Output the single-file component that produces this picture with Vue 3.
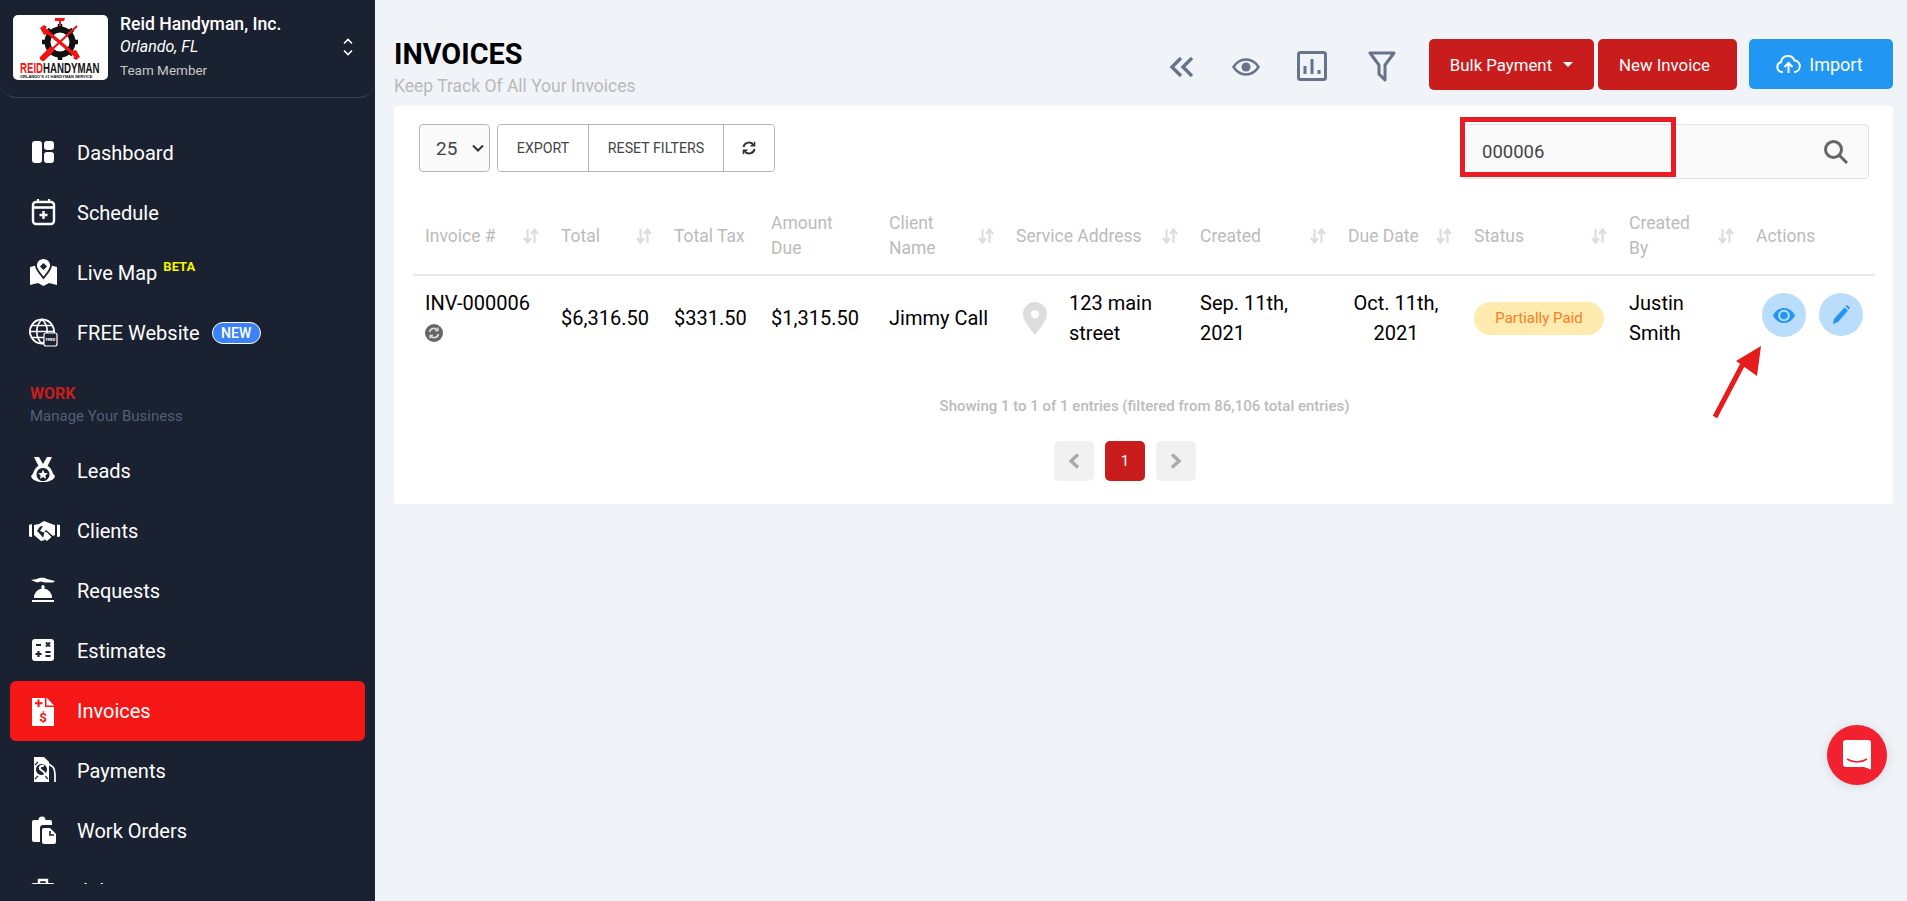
<script setup>
const DARK = '#1a2130'
const RED = '#f51616'
const rr = (x, y, w, h, r) =>
  `M${x + r} ${y}H${x + w - r}a${r} ${r} 0 0 1 ${r} ${r}V${y + h - r}a${r} ${r} 0 0 1 -${r} ${r}H${x + r}a${r} ${r} 0 0 1 -${r} -${r}V${y + r}a${r} ${r} 0 0 1 ${r} -${r}Z`

const icons = {
  dashboard: [{ d: rr(3, 3, 10, 22, 3) }, { d: rr(15, 3, 10, 9, 3) }, { d: rr(15, 14, 10, 11, 3) }],
  schedule: [
    { d: rr(4, 4, 21, 22, 3), f: 'none', s: '#fff', w: 2.4 },
    { d: 'M4 9.5H25', f: 'none', s: '#fff', w: 2.6 },
    { d: 'M9 1V5M20 1V5', f: 'none', s: '#fff', w: 2.2 },
    { d: 'M14.5 13V21M10.5 17H18.5', f: 'none', s: '#fff', w: 2.4 }
  ],
  map: [
    { d: 'M1 9L9 7L14.5 10L20 7L28 9V27L20 25L14.5 28L9 25L1 27Z' },
    { d: 'M14.5 0a7.5 7.5 0 0 1 7.5 7.5c0 4-4 8-7.5 12.500c-3.500-4.500-7.500-8.500-7.500-12.500a7.500 7.500 0 0 1 7.500-7.500Z', s: DARK, w: 1.8 },
    { d: 'M14.500 5L18 8.500L14.500 12L11 8.500Z', f: DARK },
    { d: 'M14.500 20.500L10 15L14.500 19L19 15Z', f: DARK }
  ],
  globe: [
    { d: 'M13 1.500a12 12 0 1 0 .01 0Z', f: 'none', s: '#fff', w: 1.8 },
    { d: 'M13 1.500c-7 6-7 18 0 24c7-6 7-18 0-24ZM1.500 13.500H25M3 7.500H23M3 19.500H23', f: 'none', s: '#fff', w: 1.6 },
    { d: rr(15, 15, 13, 13, 2), f: DARK, s: '#fff', w: 1.2 },
    { t: 'FREE', x: 21.5, y: 23.2, size: 4.2 }
  ],
  leads: [
    { d: 'M5 1H10L14 8L18 1H23L18.500 10H9.500Z' },
    { d: 'M14 9a9.500 9.500 0 0 1 9 6c1 3 2 4 3 5c-1 4-6 6-12 6s-11-2-12-6c1-1 2-2 3-5a9.500 9.500 0 0 1 9-6Z' },
    { d: 'M14 12a6.500 6.500 0 1 0 .01 0Z', f: DARK },
    { d: 'M14 13.700l1.500 3.200 3.400.3-2.600 2.200.8 3.300-3.100-1.800-3.100 1.800.8-3.300-2.600-2.200 3.400-.3Z' }
  ],
  clients: [
    { d: 'M0 9L3 8V21L0 20.500ZM28 8.500L31 9V20.500L28 21Z' },
    { d: 'M5 9L10 8L15 5L24 8.500L26 9V19L24 20L17 14L15 16.500L11 15L14 10L11 10.500L8 15L11 18L16 24L12 25L5 19Z' },
    { d: 'M15.500 16L17.500 16L22.500 21L18 25L14 22Z' }
  ],
  requests: [
    { d: 'M2 4L8 3C12 1 16 2 18 3L26 5L24 6.500H16L12 5.500L8 6.500Z' },
    { d: 'M14 9a2 2 0 0 1 1 3.500a9 9 0 0 1 8 9.500H5a9 9 0 0 1 8-9.500a2 2 0 0 1 1-3.500Z' },
    { d: 'M3 24H25V26H3Z' }
  ],
  estimates: [
    { d: rr(3, 3, 22, 22, 3) },
    { d: 'M7 9H12M17 6.500L21 10.500M21 6.500L17 10.500M9.500 15V21M6.500 18H12.500M16.500 16H21.500M16.500 20H21.500', f: 'none', s: DARK, w: 2.1 }
  ],
  invoices: [
    { d: 'M3 2H16V11H25V29a1 1 0 0 1 -1 1H4a1 1 0 0 1 -1-1Z' },
    { d: 'M17.500 1.500L25 9.500H17.500Z' },
    { d: 'M9.500 3.500V11M6 7.200H13.500', f: 'none', s: RED, w: 2 },
    { t: '$', x: 14.2, y: 25.5, size: 13.5, f: RED, weight: 700 }
  ],
  payments: [
    { d: 'M5 1H15L20 6V26H5Z' },
    { d: 'M6 9L9 6M6 23L9 20M19 23L16 20', f: 'none', s: DARK, w: 1.2 },
    { d: 'M12.500 8a5.500 5.500 0 1 0 .01 0Z', f: DARK },
    { d: 'M15 10c-3-1-5 1-4 3s5 2 5 5s-3 4-6 2', f: 'none', s: '#fff', w: 2 },
    { d: 'M17 6L24 11C25.500 13 26 16 26 20V26', f: 'none', s: '#fff', w: 1.7 }
  ],
  orders: [
    { d: 'M3 6a2 2 0 0 1 2-2H9.500a3.500 3.500 0 0 1 7 0H21a2 2 0 0 1 2 2V9H14a3 3 0 0 0 -3 3V26H5a2 2 0 0 1 -2-2Z' },
    { d: 'M15 12H21L27 18V26a2 2 0 0 1 -2 2H15a2 2 0 0 1 -2-2V14a2 2 0 0 1 2-2Z' },
    { d: 'M21 15V19H25', f: 'none', s: DARK, w: 1.6 }
  ],
  jobs: [
    { d: 'M10 8V4H18V8', f: 'none', s: '#fff', w: 2.4 },
    { d: rr(2, 7, 24, 19, 3) }
  ]
}

const navTop = [
  { label: 'Dashboard', icon: 'dashboard' },
  { label: 'Schedule', icon: 'schedule' },
  { label: 'Live Map', icon: 'map', sup: 'BETA' },
  { label: 'FREE Website', icon: 'globe', pill: 'NEW' }
]
const navWork = [
  { label: 'Leads', icon: 'leads' },
  { label: 'Clients', icon: 'clients' },
  { label: 'Requests', icon: 'requests' },
  { label: 'Estimates', icon: 'estimates' },
  { label: 'Invoices', icon: 'invoices', active: true },
  { label: 'Payments', icon: 'payments' },
  { label: 'Work Orders', icon: 'orders' },
  { label: 'Jobs', icon: 'jobs' }
]
const groups = [navTop, null, navWork]

const columns = [
  { label: 'Invoice #', width: 136, sort: true },
  { label: 'Total', width: 113, sort: true },
  { label: 'Total Tax', width: 97 },
  { label: 'Amount Due', width: 118, narrow: true },
  { label: 'Client Name', width: 127, sort: true, narrow: true },
  { label: 'Service Address', width: 184, sort: true },
  { label: 'Created', width: 148, sort: true },
  { label: 'Due Date', width: 126, sort: true },
  { label: 'Status', width: 155, sort: true },
  { label: 'Created By', width: 127, sort: true, narrow: true },
  { label: 'Actions', width: 131 }
]
</script>

<template>
  <div class="app">
    <aside class="sidebar">
      <header class="account">
        <div class="logo">
          <svg width="95" height="65" viewBox="0 0 95 65">
            <circle cx="47" cy="27" r="12.500" fill="none" stroke="#111" stroke-width="6" />
            <g stroke="#111" stroke-width="4.500">
              <path d="M47 9V13M47 41V45M29 27H33M61 27H65M34.300 14.300L37 17M59.700 14.300L57 17M34.300 39.700L37 37M59.700 39.700L57 37" />
            </g>
            <path d="M31 14L63 41" stroke="#f01414" stroke-width="3.500" />
            <path d="M27 13l4-3 3 2-2 2 1 2 3-1-1 4-4 1zM67 42l-4 3-3-2 2-2-1-2-3 1 1-4 4-1z" fill="#f01414" />
            <path d="M64 11L34 39" stroke="#f01414" stroke-width="2.200" />
            <path d="M38 35L32 41L30 43" stroke="#f01414" stroke-width="6" stroke-linecap="round" />
            <path d="M42 3H52L51 6H48V11H46V6L42 6Z" fill="#f01414" />
            <text transform="translate(7 58) scale(.645 1)" font-size="15" font-weight="700" font-family="'Liberation Sans', sans-serif" fill="#111"><tspan fill="#f01414">REID</tspan>HANDYMAN</text>
            <rect x="7" y="59" width="80" height="5" fill="#fff" />
            <text x="7" y="63" font-size="4" font-weight="700" font-family="'Liberation Sans', sans-serif" fill="#111">ORLANDO'S #1 HANDYMAN SERVICE</text>
          </svg>
        </div>
        <div class="account-text">
          <div class="account-name">Reid Handyman, Inc.</div>
          <div class="account-city">Orlando, FL</div>
          <div class="account-role">Team Member</div>
        </div>
        <svg class="updown" width="12" height="20" viewBox="0 0 12 20" fill="none" stroke="#fff" stroke-width="1.600">
          <path d="M2 6.500L6 2.500L10 6.500M2 13.500L6 17.500L10 13.500" />
        </svg>
      </header>

      <nav class="nav">
        <template v-for="(group, gi) in groups" :key="gi">
          <div v-if="!group" class="section">
            <div class="section-title">WORK</div>
            <div class="section-sub">Manage Your Business</div>
          </div>
          <template v-else>
            <a v-for="item in group" :key="item.label" class="nav-item" :class="{ active: item.active }">
              <svg class="nav-icon" width="31" height="31" viewBox="0 0 31 31" fill="#fff">
                <template v-for="(p, i) in icons[item.icon]" :key="i">
                  <text v-if="p.t" :x="p.x" :y="p.y" :font-size="p.size" :fill="p.f || '#fff'" font-weight="700" text-anchor="middle" font-family="Roboto, sans-serif">{{ p.t }}</text>
                  <path v-else :d="p.d" :fill="p.f || '#fff'" :stroke="p.s || 'none'" :stroke-width="p.w || 0" />
                </template>
              </svg>
              <span>{{ item.label }}</span>
              <sup v-if="item.sup" class="beta">{{ item.sup }}</sup>
              <span v-if="item.pill" class="new-pill">{{ item.pill }}</span>
            </a>
          </template>
        </template>
      </nav>
    </aside>

    <main class="main">
      <div class="page-head">
        <div class="page-title">
          <h1>INVOICES</h1>
          <p>Keep Track Of All Your Invoices</p>
        </div>
        <div class="page-actions">
          <svg class="tool chev" width="28" height="24" viewBox="0 0 28 24" fill="none" stroke="#667389" stroke-width="3.400">
            <path d="M13 3L4 12L13 21M24 3L15 12L24 21" />
          </svg>
          <svg class="tool eye" width="28" height="18" viewBox="0 0 28 18">
            <path d="M1.500 9C5 3.500 9 1.500 14 1.500S23 3.500 26.500 9C23 14.500 19 16.500 14 16.500S5 14.500 1.500 9Z" fill="none" stroke="#667389" stroke-width="2.400" />
            <circle cx="14" cy="9" r="4.500" fill="#667389" />
          </svg>
          <svg class="tool chart" width="30" height="30" viewBox="0 0 30 30" fill="none" stroke="#667389">
            <rect x="1.500" y="1.500" width="27" height="27" rx="2" stroke-width="3" />
            <path d="M8 23V15M15 23V8M22 23V19" stroke-width="3" />
          </svg>
          <svg class="tool filter" width="28" height="31" viewBox="0 0 28 31" fill="none" stroke="#667389" stroke-width="3" stroke-linejoin="round">
            <path d="M2 2H26L17 14V29L11 23V14Z" />
          </svg>
          <button class="btn red bulk">Bulk Payment <i class="caret"></i></button>
          <button class="btn red new-inv">New Invoice</button>
          <button class="btn blue import">
            <svg width="25" height="20" viewBox="0 0 25 20" fill="none" stroke="#fff" stroke-width="2">
              <path d="M7 18H6a5 5 0 0 1 -1-9.800A7 7 0 0 1 18.500 6.500a5.800 5.800 0 0 1 .5 11.500H18" />
              <path d="M12.500 19V10M8.500 13L12.500 9L16.500 13" />
            </svg>
            Import
          </button>
        </div>
      </div>

      <section class="card">
        <div class="toolbar">
          <div class="select-wrap">
            <select class="page-size">
              <option>25</option>
            </select>
            <svg class="select-arrow" width="12" height="8" viewBox="0 0 12 8" fill="none" stroke="#333" stroke-width="2">
              <path d="M1 1.500L6 6.500L11 1.500" />
            </svg>
          </div>
          <div class="btn-group">
            <button class="tb-btn export">EXPORT</button>
            <button class="tb-btn reset">RESET FILTERS</button>
            <button class="tb-btn refresh" aria-label="Refresh">
              <svg width="14" height="14" viewBox="0 0 14 14" fill="none" stroke="#333" stroke-width="2">
                <path d="M1.500 6a5.500 5.500 0 0 1 10-2M12.500 8a5.500 5.500 0 0 1 -10 2" />
                <path d="M12.500 .8V4.800H8.500M1.500 13.200V9.200H5.500" stroke-width="1.600" />
              </svg>
            </button>
          </div>
          <div class="search">
            <span class="search-value">000006</span>
            <svg width="26" height="24" viewBox="0 0 26 24" fill="none" stroke="#666" stroke-width="3">
              <circle cx="10.500" cy="9.500" r="8" />
              <path d="M16.500 15.500L24 23" />
            </svg>
          </div>
        </div>

        <table class="table">
          <colgroup>
            <col v-for="c in columns" :key="c.label" :style="{ width: c.width + 'px' }" />
          </colgroup>
          <thead>
            <tr>
              <th v-for="c in columns" :key="c.label">
                <div class="th-inner">
                  <span :class="{ narrow: c.narrow }">{{ c.label }}</span>
                  <svg v-if="c.sort" class="sort" width="16" height="16" viewBox="0 0 16 16" fill="none" stroke="#ddd" stroke-width="2.200">
                    <path d="M4.500 1V14M1 10L4.500 14.500L8 10" />
                    <path d="M11.500 15V2M8 6L11.500 1.500L15 6" />
                  </svg>
                </div>
              </th>
            </tr>
          </thead>
          <tbody>
            <tr>
              <td class="top">
                <div>INV-000006</div>
                <svg class="sync" width="18" height="18" viewBox="0 0 18 18">
                  <circle cx="9" cy="9" r="9" fill="#666" />
                  <g fill="none" stroke="#ddd" stroke-width="1.700">
                    <path d="M4.500 8a4.600 4.600 0 0 1 8-2M13.500 10a4.600 4.600 0 0 1 -8 2" />
                    <path d="M13 3.500V6.500H10M5 14.500V11.500H8" stroke-width="1.300" />
                  </g>
                </svg>
              </td>
              <td>$6,316.50</td>
              <td>$331.50</td>
              <td>$1,315.50</td>
              <td>Jimmy Call</td>
              <td>
                <div class="address">
                  <svg width="24" height="33" viewBox="0 0 24 33">
                    <path fill-rule="evenodd" fill="#ddd" d="M12 0a12 12 0 0 1 12 12c0 7-7 14-12 21C7 26 0 19 0 12A12 12 0 0 1 12 0Zm0 8a4.200 4.200 0 1 0 .01 0Z" />
                  </svg>
                  <span>123 main street</span>
                </div>
              </td>
              <td><div class="created">Sep. 11th, 2021</div></td>
              <td class="center"><div class="due">Oct. 11th, 2021</div></td>
              <td><span class="status">Partially Paid</span></td>
              <td><div class="creator">Justin Smith</div></td>
              <td>
                <div class="row-actions">
                  <button class="round view" aria-label="View">
                    <svg width="22" height="15" viewBox="0 0 22 15">
                      <path fill-rule="evenodd" fill="#2196f3" d="M11 0c4.800 0 8.800 3 11 7.500C19.800 12 15.800 15 11 15S2.200 12 0 7.500C2.200 3 6.200 0 11 0Zm0 1.700a5.800 5.800 0 1 0 .01 0Z" />
                      <circle cx="11" cy="7.500" r="3.800" fill="#2196f3" />
                    </svg>
                  </button>
                  <button class="round edit" aria-label="Edit">
                    <svg width="18" height="20" viewBox="0 0 18 20" fill="#2196f3">
                      <path d="M12.500 2.500L16 5.500L6 17L1 19L2 14Z" />
                      <path d="M13.500 1L15 0L18 2.800L16.800 4.500Z" />
                    </svg>
                  </button>
                </div>
              </td>
            </tr>
          </tbody>
        </table>

        <div class="info">Showing 1 to 1 of 1 entries (filtered from 86,106 total entries)</div>
        <div class="pager">
          <span class="page ghost">
            <svg width="12" height="16" viewBox="0 0 12 16" fill="none" stroke="#aaa" stroke-width="3.400"><path d="M10 1.500L3 8L10 14.500" /></svg>
          </span>
          <span class="page current">1</span>
          <span class="page ghost">
            <svg width="12" height="16" viewBox="0 0 12 16" fill="none" stroke="#aaa" stroke-width="3.400"><path d="M2 1.500L9 8L2 14.500" /></svg>
          </span>
        </div>
      </section>
    </main>

    <div class="highlight"></div>
    <svg class="arrow" width="60" height="84" viewBox="0 0 60 84">
      <path d="M5 78L35 21" stroke="#e61c1c" stroke-width="5" />
      <path d="M51 7L26 22L47 37Z" fill="#e61c1c" />
    </svg>
    <button class="chat" aria-label="Chat">
      <svg width="28" height="30" viewBox="0 0 28 30">
        <path d="M3 0H25a3 3 0 0 1 3 3V29.500L21 27H3a3 3 0 0 1 -3-3V3a3 3 0 0 1 3-3Z" fill="#fff" />
        <path d="M4 19C10 23 18 23 24 19" fill="none" stroke="#f2212f" stroke-width="1.600" />
      </svg>
    </button>
  </div>
</template>

<style>
html, body { margin: 0; overflow: hidden; }
</style>

<style scoped>
.app {
  position: relative;
  display: flex;
  height: 901px;
  font-family: Roboto, sans-serif;
  background: #f0f4f9;
  overflow: hidden;
}
.sidebar {
  width: 375px;
  flex: none;
  display: flex;
  flex-direction: column;
  background: #1a2130;
  color: #fff;
}
.account {
  height: 97px;
  box-sizing: content-box;
  display: flex;
  align-items: flex-start;
  border-bottom: 1px solid #3a404d;
  border-radius: 0 0 16px 16px;
  position: relative;
}
.logo {
  margin: 15px 0 0 13px;
  width: 95px;
  height: 65px;
  background: #fff;
  border-radius: 5px;
  overflow: hidden;
  flex: none;
}
.logo svg { display: block; }
.account-text { margin: 13px 0 0 12px; flex: 1; }
.account-name { font-size: 17.600px; font-weight: 500; line-height: 22px; }
.account-city { font-size: 16px; font-style: italic; line-height: 24px; }
.account-role { font-size: 13.500px; line-height: 23px; color: #c8c8c8; }
.updown { margin: 37px 21px 0 0; }
.nav {
  flex: 1;
  min-height: 0;
  margin-bottom: 17px;
  padding-top: 25px;
  overflow: hidden;
}
.nav-item {
  display: flex;
  align-items: center;
  height: 60px;
  margin: 0 10px;
  padding-left: 19px;
  border-radius: 6px;
  font-size: 20px;
  color: #fff;
}
.nav-item.active { background: #f51616; }
.nav-icon { flex: none; margin-right: 17px; }
.beta {
  font-size: 13px;
  font-weight: 700;
  color: #f5f500;
  margin: -14px 0 0 6px;
  line-height: 1;
}
.new-pill {
  margin-left: 12px;
  width: 49px;
  height: 22px;
  box-sizing: border-box;
  border: 1px solid #fff;
  border-radius: 11px;
  background: #3b82f6;
  font-size: 14px;
  font-weight: 500;
  line-height: 20px;
  text-align: center;
}
.section { height: 78px; box-sizing: border-box; padding: 21px 0 0 30px; }
.section-title { font-size: 16px; font-weight: 700; line-height: 20px; color: #c81e1e; }
.section-sub { font-size: 15px; line-height: 24px; color: #535f7a; }

.main { flex: 1; min-width: 0; }
.page-head {
  height: 106px;
  box-sizing: border-box;
  display: flex;
  justify-content: space-between;
  padding: 0 14px 0 19px;
}
.page-title { padding-top: 37px; }
.page-title h1 { margin: 0; font-size: 28.800px; font-weight: 700; line-height: 34px; color: #000; }
.page-title p { margin: 5px 0 0; font-size: 17.500px; line-height: 20px; color: #b9b9b9; }
.page-actions { display: flex; align-items: flex-start; padding-top: 39px; }
.tool { flex: none; }
.chev { margin: 16px 0 0 0; }
.eye { margin: 19px 0 0 36px; }
.chart { margin: 12px 0 0 37px; }
.filter { margin: 12px 0 0 41px; }
.btn {
  display: flex;
  align-items: center;
  justify-content: center;
  border: 0;
  border-radius: 5px;
  color: #fff;
  font-family: Roboto, sans-serif;
  font-size: 16.800px;
  height: 51px;
  padding: 0;
}
.red { background: #c91d1d; }
.blue { background: #2196f3; }
.bulk { width: 165px; margin-left: 33px; }
.new-inv { width: 139px; margin-left: 4px; padding-right: 6px; }
.import { width: 144px; margin-left: 12px; height: 50px; font-size: 18px; gap: 8px; padding-right: 3px; }
.caret {
  display: inline-block;
  margin-left: 11px;
  border-left: 5px solid transparent;
  border-right: 5px solid transparent;
  border-top: 5px solid #fff;
}

.card {
  margin: 0 14px 0 19px;
  box-sizing: border-box;
  height: 398px;
  padding: 18px 17px 0 19px;
  background: #fff;
  border-radius: 4px;
}
.toolbar { display: flex; align-items: flex-start; padding: 0 7px 0 6px; }
.select-wrap { position: relative; width: 71px; height: 48px; }
.page-size {
  width: 71px;
  height: 48px;
  box-sizing: border-box;
  border: 1px solid #b5b5b5;
  border-radius: 4px;
  background: #fafafa;
  color: #444;
  font-family: Roboto, sans-serif;
  font-size: 19px;
  padding-left: 16px;
  appearance: none;
}
.select-arrow { position: absolute; right: 6px; top: 20px; pointer-events: none; }
.btn-group {
  display: flex;
  height: 48px;
  box-sizing: border-box;
  margin-left: 7px;
  border: 1px solid #b5b5b5;
  border-radius: 4px;
}
.tb-btn {
  border: 0;
  background: #fff;
  border-radius: 4px;
  font-family: Roboto, sans-serif;
  font-size: 14.200px;
  color: #444;
  padding: 0;
}
.tb-btn + .tb-btn { border-left: 1px solid #b5b5b5; border-radius: 0 4px 4px 0; }
.export { width: 90px; }
.reset { width: 135px; border-radius: 0 !important; }
.refresh { width: 51px; display: flex; align-items: center; justify-content: center; }
.search {
  margin-left: auto;
  width: 407px;
  height: 55px;
  box-sizing: border-box;
  display: flex;
  align-items: center;
  justify-content: space-between;
  padding: 0 19px 0 19px;
  border: 1px solid #e2e2e2;
  border-radius: 4px;
  background: #fafafa;
}
.search-value { font-size: 18.500px; color: #444; }

.table {
  margin-top: 19px;
  width: 1462px;
  table-layout: fixed;
  border-collapse: collapse;
}
th {
  padding: 13px 0 13px 12px;
  border-bottom: 2px solid #e9e9e9;
  font-size: 17.500px;
  font-weight: 400;
  line-height: 25px;
  color: #bbb;
  text-align: left;
}
.th-inner { display: flex; align-items: center; justify-content: space-between; padding-right: 10px; }
.narrow { width: 60px; }
.sort { flex: none; }
td {
  padding: 12px 0 12px 12px;
  font-size: 20px;
  line-height: 30px;
  color: #000;
  vertical-align: middle;
}
td.top { vertical-align: top; }
.center { text-align: center; }
.sync { display: block; margin-top: 6px; }
.address { display: flex; align-items: center; gap: 22px; padding-left: 7px; }
.address span { width: 100px; }
.created { width: 120px; }
.due { width: 96px; }
.status {
  display: block;
  width: 130px;
  height: 33px;
  border-radius: 17px;
  background: #ffeab0;
  color: #f77f1c;
  font-size: 15px;
  line-height: 33px;
  text-align: center;
}
.creator { width: 80px; }
.row-actions { display: flex; gap: 13px; padding-left: 6px; align-items: flex-start; margin-top: -6px; }
.round {
  width: 44px;
  height: 44px;
  border: 0;
  border-radius: 50%;
  background: #b9ddfb;
  display: flex;
  align-items: center;
  justify-content: center;
  padding: 0;
}
.edit { height: 43px; }
.info {
  margin-top: 36px;
  font-size: 15px;
  font-weight: 500;
  line-height: 20px;
  color: #bbb;
  text-align: center;
}
.pager { display: flex; justify-content: center; gap: 11px; margin-top: 25px; padding-right: 39px; }
.page {
  width: 40px;
  height: 40px;
  border-radius: 5px;
  display: flex;
  align-items: center;
  justify-content: center;
  font-size: 15px;
}
.ghost { background: #f1f1f1; }
.current { background: #c91d1d; color: #fff; }

.highlight {
  position: absolute;
  left: 1460px;
  top: 117px;
  width: 216px;
  height: 60px;
  box-sizing: border-box;
  border: 5px solid #e81c24;
}
.arrow { position: absolute; left: 1710px; top: 339px; }
.chat {
  position: absolute;
  left: 1827px;
  top: 725px;
  width: 60px;
  height: 60px;
  border: 0;
  border-radius: 50%;
  padding: 0;
  background: #f2212f;
  box-shadow: 0 1px 12px rgba(0, 0, 0, .12);
  display: flex;
  align-items: center;
  justify-content: center;
}
</style>
